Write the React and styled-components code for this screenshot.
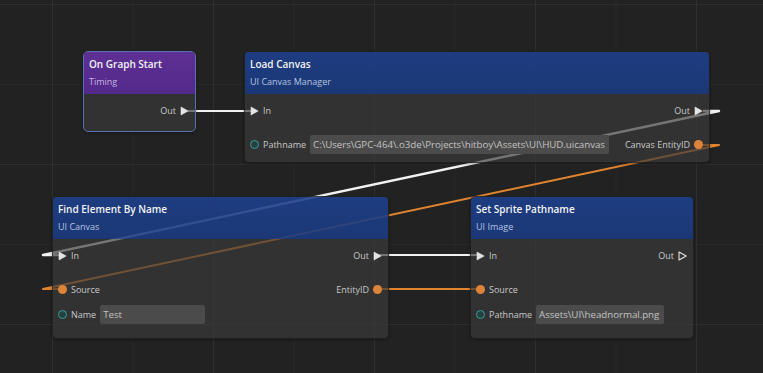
import React from 'react';
import styled, { createGlobalStyle } from 'styled-components';

const Global = createGlobalStyle`
  html, body { margin: 0; padding: 0; background: #222222; }
  body { font-family: "Open Sans", "Noto Sans", sans-serif; }
  #root { width: 763px; height: 373px; }
`;

const Canvas = styled.div`
  position: relative;
  width: 763px;
  height: 373px;
  overflow: hidden;
  background-color: #222222;
  background-image:
    linear-gradient(to right, #2f2f2f 1px, transparent 1px),
    linear-gradient(to bottom, #2f2f2f 1px, transparent 1px),
    linear-gradient(to right, #282828 1px, transparent 1px),
    linear-gradient(to bottom, #282828 1px, transparent 1px);
  background-size: 161px 100%, 100% 160px, 80.5px 100%, 100% 80px;
  background-position: 52px 0, 0 4px, 52px 0, 0 4px;
`;

const Wires = styled.svg`
  position: absolute;
  left: 0;
  top: 0;
`;

const Node = styled.div`
  position: absolute;
  left: ${p => p.$x}px;
  top: ${p => p.$y}px;
  width: ${p => p.$w}px;
  height: ${p => p.$h}px;
  box-sizing: border-box;
  display: flex;
  flex-direction: column;
  border: 1px solid ${p => (p.$selected ? '#5670b0' : 'rgba(18,18,18,0.55)')};
  border-radius: 5px;
  overflow: hidden;
  background: rgba(58, 58, 58, 0.68);
  box-shadow: 0 1px 3px rgba(0, 0, 0, 0.35);
`;

const tones = {
  purple: {
    bg: 'linear-gradient(to bottom, #5e3094, #52298a)',
    sub: '#c6b6e0',
  },
  blue: {
    bg: 'linear-gradient(to bottom, rgba(20,66,166,0.68), rgba(16,58,150,0.68))',
    sub: '#b7c4e0',
  },
};

const Header = styled.div`
  height: 42px;
  box-sizing: border-box;
  padding: 4px 6px 0 5px;
  background: ${p => tones[p.$tone].bg};
  display: flex;
  flex-direction: column;
`;

const Title = styled.div`
  font-size: 10px;
  font-weight: 600;
  line-height: 16px;
  color: #f3f3f3;
  white-space: nowrap;
`;

const Subtitle = styled.div`
  margin-top: 3px;
  font-size: 9px;
  line-height: 14px;
  color: ${p => tones[p.$tone].sub};
  white-space: nowrap;
`;

const Body = styled.div`
  flex: 1;
  display: flex;
  flex-direction: column;
  padding: 8px 6px 0 5px;
`;

const ExecRow = styled.div`
  height: 18px;
  display: flex;
  align-items: center;
  justify-content: space-between;
`;

const DataList = styled.div`
  margin-top: 15px;
  display: flex;
  flex-direction: column;
  gap: 6px;
`;

const DataRow = styled.div`
  height: 19px;
  display: flex;
  align-items: center;
  justify-content: space-between;
`;

const Slot = styled.div`
  display: flex;
  align-items: center;
  gap: 4px;
`;

const Label = styled.span`
  font-size: 9px;
  line-height: 12px;
  color: #c9c9c9;
  white-space: nowrap;
`;

const Field = styled.div`
  width: ${p => p.$w}px;
  height: 19px;
  box-sizing: border-box;
  padding: 0 3px;
  background: #4b4b4b;
  border-radius: 2px;
  font-size: 9.75px;
  letter-spacing: -0.05px;
  line-height: 19px;
  color: #c2c2c2;
  white-space: nowrap;
  overflow: hidden;
`;

const Dot = styled.span`
  width: 9px;
  height: 9px;
  box-sizing: border-box;
  border-radius: 50%;
  flex: none;
  background: ${p => (p.$kind === 'entity' ? '#de843a' : '#24403f')};
  border: ${p => (p.$kind === 'entity' ? '0' : '1.6px solid #3a9d98')};
`;

const PinSvg = styled.svg`
  flex: none;
  display: block;
`;

const ExecPin = ({ filled = true }) => (
  <PinSvg width="9" height="10" viewBox="0 0 9 10">
    <path
      d="M1 1 L8.2 5 L1 9 Z"
      fill={filled ? '#e4e4e4' : 'none'}
      stroke="#e4e4e4"
      strokeWidth={filled ? 0.6 : 1.1}
      strokeLinejoin="round"
    />
  </PinSvg>
);

const InExec = () => (
  <Slot>
    <ExecPin />
    <Label>In</Label>
  </Slot>
);

const OutExec = ({ filled = true }) => (
  <Slot>
    <Label>Out</Label>
    <ExecPin filled={filled} />
  </Slot>
);

export default function App() {
  const white = '#f2f2f2';
  const orange = '#e2842f';
  return (
    <Canvas>
      <Global />
      <Wires width="763" height="373" viewBox="0 0 763 373">
        <path d="M188 111 L252 111" stroke={white} strokeWidth="2.2" fill="none" />
        <path d="M703 111 L719 111 L43 255 L60 255" stroke={white} strokeWidth="2.4" fill="none" strokeLinejoin="round" />
        <path d="M698 145 L719 145 L43 289 L62 289" stroke={orange} strokeWidth="2" fill="none" strokeLinejoin="round" />
        <path d="M379 255 L479 255" stroke={white} strokeWidth="2.2" fill="none" />
        <path d="M376 289 L482 289" stroke={orange} strokeWidth="2" fill="none" />
      </Wires>

      <Node $x={83} $y={51} $w={113} $h={81} $selected>
        <Header $tone="purple">
          <Title>On Graph Start</Title>
          <Subtitle $tone="purple">Timing</Subtitle>
        </Header>
        <Body>
          <ExecRow>
            <span />
            <OutExec />
          </ExecRow>
        </Body>
      </Node>

      <Node $x={244} $y={51} $w={466} $h={112}>
        <Header $tone="blue">
          <Title>Load Canvas</Title>
          <Subtitle $tone="blue">UI Canvas Manager</Subtitle>
        </Header>
        <Body>
          <ExecRow>
            <InExec />
            <OutExec />
          </ExecRow>
          <DataList>
            <DataRow>
              <Slot>
                <Dot />
                <Label>Pathname</Label>
                <Field $w={299}>C:\Users\GPC-464\.o3de\Projects\hitboy\Assets\UI\HUD.uicanvas</Field>
              </Slot>
              <Slot>
                <Label>Canvas EntityID</Label>
                <Dot $kind="entity" />
              </Slot>
            </DataRow>
          </DataList>
        </Body>
      </Node>

      <Node $x={52} $y={196} $w={337} $h={143}>
        <Header $tone="blue">
          <Title>Find Element By Name</Title>
          <Subtitle $tone="blue">UI Canvas</Subtitle>
        </Header>
        <Body>
          <ExecRow>
            <InExec />
            <OutExec />
          </ExecRow>
          <DataList>
            <DataRow>
              <Slot>
                <Dot $kind="entity" />
                <Label>Source</Label>
              </Slot>
              <Slot>
                <Label>EntityID</Label>
                <Dot $kind="entity" />
              </Slot>
            </DataRow>
            <DataRow>
              <Slot>
                <Dot />
                <Label>Name</Label>
                <Field $w={105}>Test</Field>
              </Slot>
            </DataRow>
          </DataList>
        </Body>
      </Node>

      <Node $x={470} $y={196} $w={224} $h={143}>
        <Header $tone="blue">
          <Title>Set Sprite Pathname</Title>
          <Subtitle $tone="blue">UI Image</Subtitle>
        </Header>
        <Body>
          <ExecRow>
            <InExec />
            <OutExec filled={false} />
          </ExecRow>
          <DataList>
            <DataRow>
              <Slot>
                <Dot $kind="entity" />
                <Label>Source</Label>
              </Slot>
            </DataRow>
            <DataRow>
              <Slot>
                <Dot />
                <Label>Pathname</Label>
                <Field $w={128}>Assets\UI\headnormal.png</Field>
              </Slot>
            </DataRow>
          </DataList>
        </Body>
      </Node>
    </Canvas>
  );
}
